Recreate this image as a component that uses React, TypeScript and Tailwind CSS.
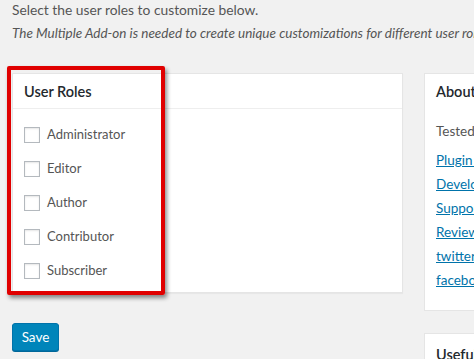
import React from 'react';

const roles = ['Administrator', 'Editor', 'Author', 'Contributor', 'Subscriber'];
const links = ['Plugin Page', 'Developer Site', 'Support Forum', 'Review this plugin', 'twitter', 'facebook'];

export default function App() {
  return (
    <div
      className="relative w-[474px] h-[359px] overflow-hidden bg-[#f1f1f1] text-[#444]"
      style={{ fontFamily: 'Lato, "Noto Sans", sans-serif' }}
    >
      <div className="px-[12px]">
        <p className="pt-[1px] text-[13.8px] leading-[18px] text-[#555] whitespace-nowrap">
          Select the user roles to customize below.
        </p>
        <p className="mt-[5px] text-[13.5px] leading-[18px] italic text-[#555] whitespace-nowrap">
          The Multiple Add-on is needed to create unique customizations for different user roles.
        </p>
      </div>

      <div className="flex mt-[31px] pl-[12px] items-start">
        {/* main column */}
        <div className="w-[391px] shrink-0">
          <div className="bg-white border border-[#e5e5e5] shadow-[0_1px_1px_rgba(0,0,0,0.04)] h-[220px]">
            <div className="h-[35px] border-b border-[#eee] px-[11px] flex items-center">
              <h2 className="text-[14.5px] font-semibold text-[#23282d] mt-[1px]">User Roles</h2>
            </div>
            <div className="px-[11px] pt-[9px] flex flex-col">
              {roles.map((r) => (
                <label key={r} className="flex items-center h-[34px] gap-[7px]">
                  <span className="w-[16px] h-[16px] border border-[#b4b9be] bg-white shadow-[inset_0_1px_2px_rgba(0,0,0,0.1)]" />
                  <span className="text-[13px] text-[#555]">{r}</span>
                </label>
              ))}
            </div>
          </div>
          <button className="mt-[30px] h-[28px] w-[47px] rounded-[3px] bg-[#0085ba] border border-[#0073aa] text-white text-[13.5px] shadow-[0_1px_0_#006799]">
            Save
          </button>
        </div>

        {/* sidebar */}
        <div className="ml-[21px] w-[200px] shrink-0 flex flex-col gap-[22px]">
          <div className="bg-white border border-[#e5e5e5] h-[238px] px-[11px]">
            <div className="h-[35px] flex items-center">
              <h2 className="text-[14.5px] font-semibold text-[#23282d]">About this plugin</h2>
            </div>
            <p className="mt-[13px] text-[13.5px] text-[#555] leading-[18px]">Tested up to WordPress 4.9</p>
            <div className="mt-[11px] flex flex-col gap-[6px]">
              {links.map((l) => (
                <a key={l} className="text-[13.5px] leading-[18px] text-[#0073aa] underline whitespace-nowrap">
                  {l}
                </a>
              ))}
            </div>
          </div>
          <div className="bg-white border border-[#e5e5e5] h-[60px] px-[11px]">
            <div className="h-[40px] flex items-center">
              <h2 className="text-[14.5px] font-semibold text-[#23282d] mt-[1px]">Useful Links</h2>
            </div>
          </div>
        </div>
      </div>

      {/* red highlight annotation */}
      <div className="absolute left-[7px] top-[66px] w-[158px] h-[229px] border-[4px] border-[#e00000] rounded-[2px] shadow-[2px_3px_4px_rgba(0,0,0,0.45)] pointer-events-none" />
    </div>
  );
}
